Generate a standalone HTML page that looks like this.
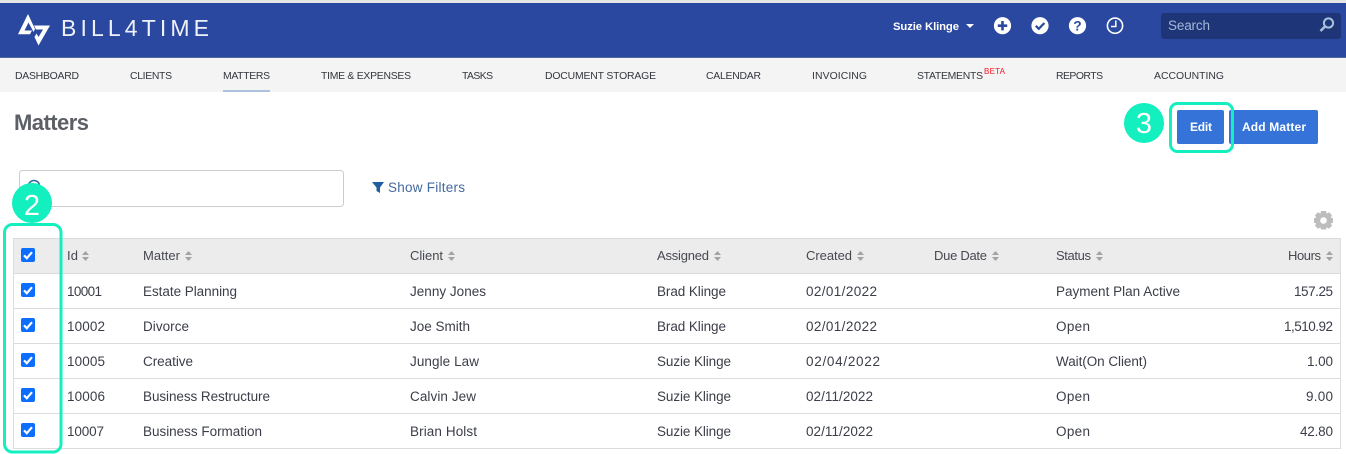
<!DOCTYPE html>
<html><head><meta charset="utf-8"><title>Matters</title>
<style>
html,body{margin:0;padding:0;background:#fff;width:1346px;height:454px;overflow:hidden}
svg{display:block}
text{font-family:"Liberation Sans",sans-serif}
.n text{font-size:10.4px;fill:#33363d}
.t text{font-size:13.5px;fill:#3b3e48}
.h text{font-size:13px;fill:#464950}
</style></head><body>
<svg width="1346" height="454" viewBox="0 0 1346 454" xmlns="http://www.w3.org/2000/svg">
<defs>
<g id="s"><path d="M0 4 3.5 0 7 4Z M0 6 7 6 3.5 10Z" fill="#a3a3a3"/></g>
<g id="c"><rect x="0" y="0" width="14" height="14" rx="2" fill="#0d6efd"/><path d="M3 7.4 5.8 10.2 11 4.2" fill="none" stroke="#fff" stroke-width="2.2"/></g>
</defs>
<rect width="1346" height="454" fill="#fff"/>
<rect width="1346" height="3" fill="#e6e6e6"/>
<rect y="3" width="1346" height="54" fill="#2a489f"/>
<rect y="57" width="1346" height="1" fill="#4d6a98"/>
<rect y="58" width="1346" height="34" fill="#f4f4f4"/>

<!-- logo -->
<path d="M28 14 18 34.3H30L32 30.5H24.5L28.5 22.5 33.5 32 35 29Z" fill="#fff"/>
<path d="M34 25.5H50L38.5 45.5 34.5 37 36.5 33.5 38.5 37 43 29.5H36Z" fill="#fff"/>
<text x="61" y="36" font-size="23" textLength="148" fill="#eef1f8">BILL4TIME</text>

<!-- header right -->
<text x="893" y="30" font-size="11.3" font-weight="bold" textLength="66" fill="#fff">Suzie Klinge</text>
<path d="M966 24H974L970 28Z" fill="#fff"/>
<circle cx="1002.5" cy="25.7" r="8.6" fill="#fff"/>
<path d="M1002.5 21V30.4M997.8 25.7H1007.2" stroke="#2a489f" stroke-width="2.6"/>
<circle cx="1040" cy="25.7" r="8.6" fill="#fff"/>
<path d="M1035.8 25.8 1038.8 28.8 1044.4 23" fill="none" stroke="#2a489f" stroke-width="2.2"/>
<circle cx="1077.5" cy="25.7" r="8.6" fill="#fff"/>
<text x="1077.5" y="30.5" font-size="13.5" font-weight="bold" text-anchor="middle" fill="#2a489f">?</text>
<circle cx="1115" cy="25.7" r="7.6" fill="none" stroke="#fff" stroke-width="1.6"/>
<path d="M1115.8 20.5V26.5H1111" fill="none" stroke="#fff" stroke-width="1.5"/>
<rect x="1161" y="13" width="180" height="26" rx="3" fill="#1e3677"/>
<text x="1168" y="30" font-size="13.5" textLength="42" fill="#a5b8d8">Search</text>
<circle cx="1328.5" cy="23" r="4.6" fill="none" stroke="#a9c0dc" stroke-width="2"/>
<path d="M1325 26.5 1320.5 31" stroke="#a9c0dc" stroke-width="2.6"/>

<!-- nav -->
<g class="n">
<text x="15" y="79" textLength="64">DASHBOARD</text>
<text x="130" y="79" textLength="42">CLIENTS</text>
<text x="223" y="79" textLength="47">MATTERS</text>
<text x="321" y="79" textLength="90">TIME &amp; EXPENSES</text>
<text x="462" y="79" textLength="31">TASKS</text>
<text x="545" y="79" textLength="111">DOCUMENT STORAGE</text>
<text x="706" y="79" textLength="55">CALENDAR</text>
<text x="812" y="79" textLength="55">INVOICING</text>
<text x="917" y="79" textLength="66">STATEMENTS</text>
<text x="1056" y="79" textLength="47">REPORTS</text>
<text x="1154" y="79" textLength="70">ACCOUNTING</text>
</g>
<text x="984" y="74" font-size="8" textLength="21" fill="#f5141e">BETA</text>
<rect x="223" y="90" width="47" height="2" fill="#adc2dc"/>

<!-- heading and buttons -->
<text x="14" y="130" font-size="22" font-weight="bold" textLength="75" fill="#5c6066">Matters</text>
<rect x="1177" y="110" width="47" height="34" rx="2" fill="#3573d9"/>
<rect x="1229" y="110" width="89" height="34" rx="2" fill="#3573d9"/>
<text x="1190" y="131" font-size="12" font-weight="bold" textLength="22" fill="#fff">Edit</text>
<text x="1242" y="131" font-size="12" font-weight="bold" textLength="64" fill="#fff">Add Matter</text>

<!-- search & filters -->
<rect x="19.5" y="170.5" width="324" height="36" rx="3" fill="#fff" stroke="#ccc"/>
<circle cx="34" cy="186" r="5.5" fill="none" stroke="#2a6f9f" stroke-width="1.6"/>
<path d="M372 182H384L380 187.5V193L376.5 191V187.5Z" fill="#1f5f9e"/>
<text x="388" y="192" font-size="13.5" textLength="77" fill="#44699f">Show Filters</text>

<!-- gear -->
<g fill="#bdbdbd">
<path d="M1321 211H1326L1326.6 213.6 1329 212.2 1332 215.2 1330.8 217.6 1333 218.2V222.8L1330.8 223.4 1332 225.8 1329 228.8 1326.6 227.4 1326 229.5H1321L1320.4 227.4 1318 228.8 1315 225.8 1316.2 223.4 1314 222.8V218.2L1316.2 217.6 1315 215.2 1318 212.2 1320.4 213.6Z"/>
</g>
<circle cx="1323.5" cy="220.5" r="3.3" fill="#fff"/>

<!-- table -->
<rect x="13" y="238" width="1327" height="35" fill="#ececec"/>
<g fill="#dcdcdc">
<rect x="13" y="238" width="1328" height="1"/>
<rect x="13" y="273" width="1328" height="1"/>
<rect x="13" y="308" width="1328" height="1"/>
<rect x="13" y="343" width="1328" height="1"/>
<rect x="13" y="378" width="1328" height="1"/>
<rect x="13" y="413" width="1328" height="1"/>
<rect x="13" y="448" width="1328" height="1"/>
<rect x="13" y="238" width="1" height="211"/>
<rect x="1340" y="238" width="1" height="211"/>
</g>

<g class="h">
<text x="67" y="260" textLength="11">Id</text>
<text x="143" y="260" textLength="37">Matter</text>
<text x="410" y="260" textLength="33">Client</text>
<text x="657" y="260" textLength="52">Assigned</text>
<text x="806" y="260" textLength="46">Created</text>
<text x="934" y="260" textLength="53">Due Date</text>
<text x="1056" y="260" textLength="35">Status</text>
<text x="1288" y="260" textLength="33">Hours</text>
</g>
<use href="#s" x="82" y="251"/>
<use href="#s" x="185" y="251"/>
<use href="#s" x="448" y="251"/>
<use href="#s" x="714" y="251"/>
<use href="#s" x="857" y="251"/>
<use href="#s" x="992" y="251"/>
<use href="#s" x="1096" y="251"/>
<use href="#s" x="1326" y="251"/>

<g class="t">
<text x="67" y="296" textLength="35">10001</text>
<text x="143" y="296" textLength="94">Estate Planning</text>
<text x="410" y="296" textLength="76">Jenny Jones</text>
<text x="657" y="296" textLength="69">Brad Klinge</text>
<text x="806" y="296" textLength="71">02/01/2022</text>
<text x="1056" y="296" textLength="124">Payment Plan Active</text>
<text x="1294" y="296" textLength="39">157.25</text>

<text x="67" y="331" textLength="38">10002</text>
<text x="143" y="331" textLength="46">Divorce</text>
<text x="410" y="331" textLength="60">Joe Smith</text>
<text x="657" y="331" textLength="69">Brad Klinge</text>
<text x="806" y="331" textLength="71">02/01/2022</text>
<text x="1056" y="331" textLength="34">Open</text>
<text x="1284" y="331" textLength="49">1,510.92</text>

<text x="67" y="366" textLength="38">10005</text>
<text x="143" y="366" textLength="50">Creative</text>
<text x="410" y="366" textLength="69">Jungle Law</text>
<text x="657" y="366" textLength="74">Suzie Klinge</text>
<text x="806" y="366" textLength="74">02/04/2022</text>
<text x="1056" y="366" textLength="91">Wait(On Client)</text>
<text x="1307" y="366" textLength="26">1.00</text>

<text x="67" y="401" textLength="38">10006</text>
<text x="143" y="401" textLength="127">Business Restructure</text>
<text x="410" y="401" textLength="66">Calvin Jew</text>
<text x="657" y="401" textLength="74">Suzie Klinge</text>
<text x="806" y="401" textLength="67">02/11/2022</text>
<text x="1056" y="401" textLength="34">Open</text>
<text x="1306" y="401" textLength="27">9.00</text>

<text x="67" y="436" textLength="37">10007</text>
<text x="143" y="436" textLength="119">Business Formation</text>
<text x="410" y="436" textLength="67">Brian Holst</text>
<text x="657" y="436" textLength="74">Suzie Klinge</text>
<text x="806" y="436" textLength="67">02/11/2022</text>
<text x="1056" y="436" textLength="34">Open</text>
<text x="1300" y="436" textLength="33">42.80</text>
</g>

<use href="#c" x="21" y="248"/>
<use href="#c" x="21" y="283"/>
<use href="#c" x="21" y="318"/>
<use href="#c" x="21" y="353"/>
<use href="#c" x="21" y="388"/>
<use href="#c" x="21" y="423"/>

<!-- annotations -->
<rect x="4.5" y="224.5" width="56.5" height="227.5" rx="8" fill="none" stroke="#14efc0" stroke-width="3"/>
<circle cx="32" cy="203" r="20" fill="#14efc0"/>
<text x="32" y="215" font-size="29" text-anchor="middle" fill="#fff">2</text>
<rect x="1170.5" y="103.5" width="62" height="48" rx="7" fill="none" stroke="#14efc0" stroke-width="3"/>
<circle cx="1144" cy="123" r="20" fill="#14efc0"/>
<text x="1144" y="133" font-size="29" text-anchor="middle" fill="#fff">3</text>
</svg>
</body></html>
